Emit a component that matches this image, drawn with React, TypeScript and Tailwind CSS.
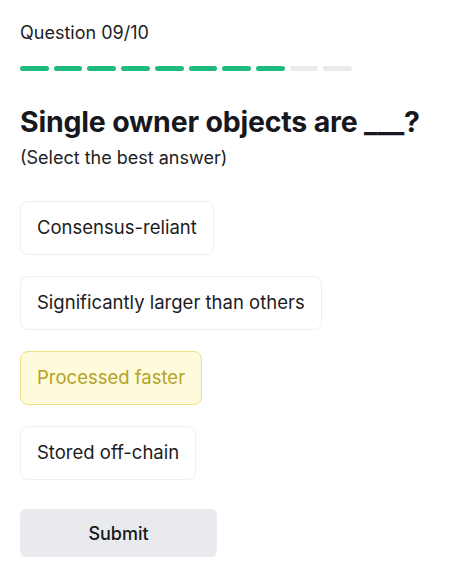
const options = [
  'Consensus-reliant',
  'Significantly larger than others',
  'Processed faster',
  'Stored off-chain',
];

export default function App() {
  const answered = 8;
  const total = 10;
  const selected = 2;

  return (
    <div className="min-h-screen bg-white px-5 pt-[21px] text-[#16181d]" style={{ fontFamily: 'Inter, "Noto Sans", sans-serif' }}>
      <p className="text-[18px] leading-6 text-[#1c1c1c]">Question 09/10</p>

      {/* progress */}
      <div className="mt-[21px] flex w-[332px] gap-[5px]">
        {Array.from({ length: total }).map((_, i) => (
          <div
            key={i}
            className={`h-[5px] flex-1 rounded-full ${i < answered ? 'bg-[#1dbb7e]' : 'bg-[#ebebeb]'}`}
          />
        ))}
      </div>

      <h1 className="mt-[33px] text-[28.5px] font-bold leading-9 tracking-[-0.2px]">Single owner objects are ___?</h1>
      <p className="mt-[6px] text-[18px] leading-6 text-[#222]">(Select the best answer)</p>

      <div className="mt-[31px] flex flex-col items-start gap-[21px]">
        {options.map((opt, i) => (
          <button
            key={opt}
            className={`flex h-[54px] items-center rounded-lg border px-4 text-[18.5px] ${
              i === selected
                ? 'border-[#ece07f] bg-[#fefbdc] text-[#b5a227]'
                : 'border-[#eeeeee] bg-white text-[#1c1c1c]'
            }`}
          >
            {opt}
          </button>
        ))}
      </div>

      <button className="mt-[29px] h-12 w-[197px] rounded-md bg-[#e9eaee] text-[18px] font-medium text-[#16181d]">
        Submit
      </button>
    </div>
  );
}
